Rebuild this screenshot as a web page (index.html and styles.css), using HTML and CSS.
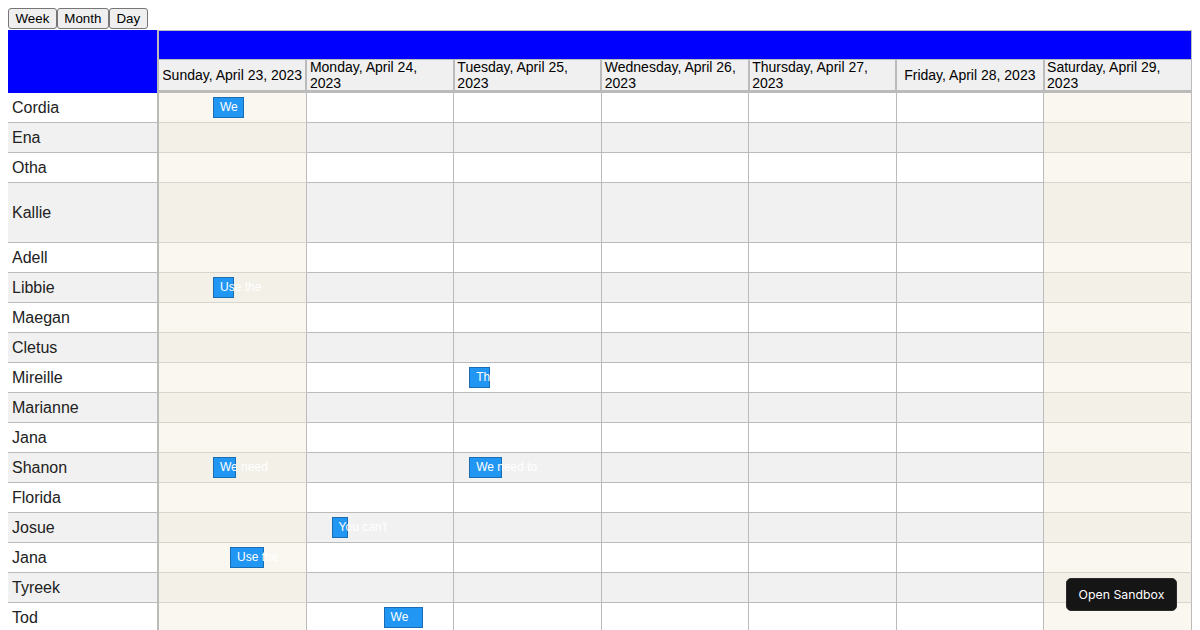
FILE: index.html
```html
<!DOCTYPE html>
<html lang="en">

<head>
    <meta charset="UTF-8">
    <meta name="viewport" content="width=device-width, initial-scale=1.0">
    <title>Scheduler</title>
    <link rel="stylesheet" href="styles.css">
</head>

<body>
    <div class="toolbar"><button>Week</button><button>Month</button><button>Day</button></div>

    <div class="scheduler">
        <div class="head">
            <div class="head-corner"></div>
            <div class="head-main">
                <div class="head-band"></div>
                <div class="head-days">
                    <div class="day-title"><span>Sunday, April 23, 2023</span></div>
                    <div class="day-title"><span>Monday, April 24, 2023</span></div>
                    <div class="day-title"><span>Tuesday, April 25, 2023</span></div>
                    <div class="day-title"><span>Wednesday, April 26, 2023</span></div>
                    <div class="day-title"><span>Thursday, April 27, 2023</span></div>
                    <div class="day-title"><span>Friday, April 28, 2023</span></div>
                    <div class="day-title"><span>Saturday, April 29, 2023</span></div>
                </div>
            </div>
        </div>

        <div class="rows" id="rows"></div>
    </div>

    <button class="sandbox">Open Sandbox</button>

    <script>
        // resources + events (day index 0 = Sunday, left/width in px from start of day cell)
        const people = [
            { name: 'Cordia', events: [{ day: 0, left: 54, width: 31, title: 'We' }] },
            { name: 'Ena' },
            { name: 'Otha' },
            { name: 'Kallie', tall: true },
            { name: 'Adell' },
            { name: 'Libbie', events: [{ day: 0, left: 54, width: 21, title: 'Use the' }] },
            { name: 'Maegan' },
            { name: 'Cletus' },
            { name: 'Mireille', events: [{ day: 2, left: 15, width: 21, title: 'The' }] },
            { name: 'Marianne' },
            { name: 'Jana' },
            {
                name: 'Shanon', events: [
                    { day: 0, left: 54, width: 23, title: 'We need' },
                    { day: 2, left: 15, width: 33, title: 'We need to' }
                ]
            },
            { name: 'Florida' },
            { name: 'Josue', events: [{ day: 1, left: 25, width: 16, title: "You can't" }] },
            { name: 'Jana', events: [{ day: 0, left: 71, width: 34, title: 'Use the' }] },
            { name: 'Tyreek' },
            { name: 'Tod', events: [{ day: 1, left: 77, width: 39, title: 'We' }] }
        ];

        const rows = document.getElementById('rows');

        people.forEach(p => {
            const row = document.createElement('div');
            row.className = 'row' + (p.tall ? ' tall' : '');

            const name = document.createElement('div');
            name.className = 'name';
            name.textContent = p.name;
            row.appendChild(name);

            for (let d = 0; d < 7; d++) {
                const cell = document.createElement('div');
                cell.className = 'cell' + (d === 0 || d === 6 ? ' weekend' : '');
                (p.events || []).filter(e => e.day === d).forEach(e => {
                    const ev = document.createElement('div');
                    ev.className = 'event';
                    ev.style.left = e.left + 'px';
                    ev.style.width = e.width + 'px';
                    ev.textContent = e.title;
                    cell.appendChild(ev);
                });
                row.appendChild(cell);
            }
            rows.appendChild(row);
        });
    </script>
</body>

</html>
```

FILE: styles.css
```css
body {
    margin: 8px;
    font-family: "Liberation Sans", Arial, sans-serif;
    color: #000;
    overflow: hidden;
}

.toolbar {
    display: flex;
    height: 22px;
}

.toolbar button {
    font-family: "Liberation Sans", Arial, sans-serif;
    font-size: 13.33px;
    margin: 0;
    height: 21px;
    padding: 1px 6.5px;
    background: #efefef;
    border: 1px solid #767676;
    border-radius: 3px;
    color: #000;
}

/* header */
.head {
    display: grid;
    grid-template-columns: 151px 1fr;
    height: 63px;
}

.head-corner {
    background: #0000ff;
    border-right: 2px solid #bbb;
}

.head-main {
    border-top: 1px solid #bbb;
    border-right: 1px solid #bbb;
    display: flex;
    flex-direction: column;
}

.head-band {
    background: #0000ff;
    height: 28px;
    border-bottom: 1px solid #bbb;
}

.head-days {
    display: grid;
    grid-template-columns: repeat(7, 1fr);
    height: 30px;
    border-bottom: 3px solid #bbb;
}

.day-title {
    background: #f0f0f0;
    border-left: 1px solid #bbb;
    border-right: 1px solid #bbb;
    padding: 0 2.5px;
    display: flex;
    align-items: center;
    justify-content: center;
    font-size: 14px;
    line-height: 16px;
    overflow: hidden;
}

.day-title:first-child {
    border-left: none;
}

.day-title:last-child {
    border-right: none;
}

/* rows */
.row {
    display: grid;
    grid-template-columns: 151px repeat(7, 1fr);
    height: 30px;
    background: #fff;
}

.row.tall {
    height: 60px;
}

.row:nth-child(even) {
    background: #f1f1f1;
}

.name {
    display: flex;
    align-items: center;
    padding-left: 4px;
    font-size: 16px;
    color: #222;
    border-right: 2px solid #bbb;
    border-bottom: 1px solid #bbb;
}

.cell {
    position: relative;
    border-right: 1px solid #bbb;
    border-bottom: 1px solid #bbb;
}

.cell.weekend {
    background: #faf7f0;
    border-bottom-color: #d9d5cc;
}

.row:nth-child(even) .cell.weekend {
    background: #f3f0e8;
}

.event {
    position: absolute;
    top: 4px;
    height: 21px;
    box-sizing: border-box;
    background: #2196f3;
    border: 1px solid #1b6db3;
    color: #fff;
    font-size: 12px;
    line-height: 19px;
    padding-left: 6px;
    white-space: nowrap;
}

.sandbox {
    position: fixed;
    right: 23px;
    bottom: 19px;
    width: 111px;
    height: 33px;
    background: #151515;
    color: #fff;
    border: 1px solid #2a2a2a;
    border-radius: 5px;
    font-family: Inter, "Liberation Sans", sans-serif;
    font-size: 12.3px;
    cursor: pointer;
}
```
